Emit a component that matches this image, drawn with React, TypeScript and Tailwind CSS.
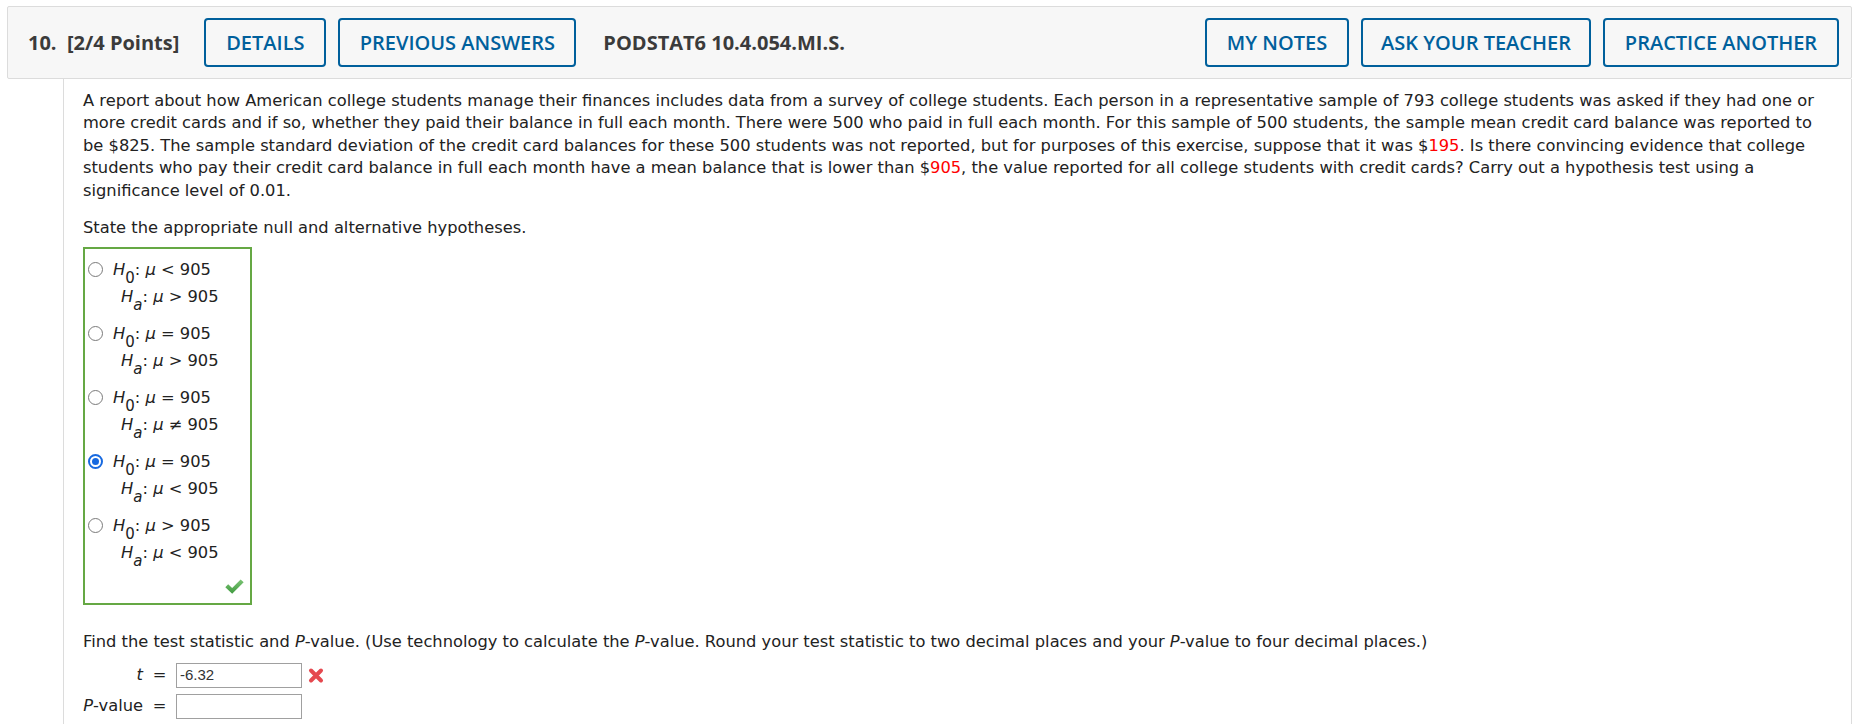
import React from "react";

const BODY = "font-['DejaVu_Sans',Verdana,sans-serif]";
const HEAD = "font-['Open_Sans','Noto_Sans',sans-serif]";

function Btn({ label, w }: { label: string; w: string }) {
  return (
    <div
      className={`${w} h-[49px] flex items-center justify-center rounded-[4px] border-2 border-[#00609c] text-[#00609c] text-[20px] font-semibold bg-transparent whitespace-nowrap`}
    >
      {label}
    </div>
  );
}

function Radio({ checked }: { checked?: boolean }) {
  if (checked) {
    return (
      <span className="w-[15px] h-[15px] rounded-full border-2 border-[#1769e0] bg-white flex items-center justify-center shrink-0">
        <span className="w-[7px] h-[7px] rounded-full bg-[#1769e0]" />
      </span>
    );
  }
  return <span className="w-[15px] h-[15px] rounded-full border-[1.5px] border-[#7a7a7a] bg-white shrink-0" />;
}

function H({ sub }: { sub: string }) {
  return (
    <span>
      <i>H</i>
      <span className={`relative top-[8px] text-[15px] ${sub === "a" ? "italic" : ""}`}>{sub}</span>
    </span>
  );
}

function Opt({ h0, ha, checked }: { h0: string; ha: string; checked?: boolean }) {
  return (
    <div className="flex items-start">
      <div className="h-[27px] flex items-center ml-[3px] mr-[10px]">
        <Radio checked={checked} />
      </div>
      <div>
        <div className="h-[27px] leading-[27px] whitespace-nowrap">
          <H sub="0" />: <i>μ</i> {h0}
        </div>
        <div className="h-[27px] leading-[27px] pl-[8px] whitespace-nowrap">
          <H sub="a" />: <i>μ</i> {ha}
        </div>
      </div>
    </div>
  );
}

export default function App() {
  return (
    <div className="w-[1865px] h-[724px] overflow-hidden bg-white pt-[6px]">
      <div className="ml-[7px] w-[1845px]">
        {/* header */}
        <div className={`${HEAD} h-[73px] bg-[#f7f7f7] border border-[#dcdcdc] rounded-[2px] flex items-center pl-[20px] pr-[12px]`}>
          <div className="text-[20px] font-bold text-[#3b3b3b] whitespace-pre">10.  [2/4 Points]</div>
          <div className="ml-[25px] flex gap-[12px]">
            <Btn label="DETAILS" w="w-[122px]" />
            <Btn label="PREVIOUS ANSWERS" w="w-[238px]" />
          </div>
          <div className="ml-[27px] text-[20px] font-bold text-[#3b3b3b] whitespace-nowrap">PODSTAT6 10.4.054.MI.S.</div>
          <div className="ml-auto flex gap-[12px]">
            <Btn label="MY NOTES" w="w-[144px]" />
            <Btn label="ASK YOUR TEACHER" w="w-[230px]" />
            <Btn label="PRACTICE ANOTHER" w="w-[236px]" />
          </div>
        </div>

        {/* content */}
        <div className={`${BODY} ml-[56px] h-[660px] border-x border-[#dcdcdc] pl-[19px] pr-[12px] pt-[11px] text-[16.3px] leading-[22.4px] text-[#222]`}>
          <p className="whitespace-nowrap">
            A report about how American college students manage their finances includes data from a survey of college students. Each person in a representative sample of 793 college students was asked if they had one or
            <br />
            more credit cards and if so, whether they paid their balance in full each month. There were 500 who paid in full each month. For this sample of 500 students, the sample mean credit card balance was reported to
            <br />
            be $825. The sample standard deviation of the credit card balances for these 500 students was not reported, but for purposes of this exercise, suppose that it was $<span className="text-[#ff0000]">195</span>. Is there convincing evidence that college
            <br />
            students who pay their credit card balance in full each month have a mean balance that is lower than $<span className="text-[#ff0000]">905</span>, the value reported for all college students with credit cards? Carry out a hypothesis test using a
            <br />
            significance level of 0.01.
          </p>

          <p className="mt-[15px]">State the appropriate null and alternative hypotheses.</p>

          <div className="mt-[8px] w-[169px] border-2 border-[#65a844] pt-[7px] pb-[8px] pr-[6px]">
            <div className="flex flex-col gap-[10px]">
              <Opt h0="< 905" ha="> 905" />
              <Opt h0="= 905" ha="> 905" />
              <Opt h0="= 905" ha="≠ 905" />
              <Opt h0="= 905" ha="< 905" checked />
              <Opt h0="> 905" ha="< 905" />
            </div>
            <div className="flex justify-end mt-[13px]">
              <svg width="19" height="16" viewBox="0 0 18 15">
                <defs>
                  <linearGradient id="gck" x1="0" y1="0" x2="0" y2="1">
                    <stop offset="0" stopColor="#7cc475" />
                    <stop offset="1" stopColor="#3f9a3f" />
                  </linearGradient>
                </defs>
                <path d="M0.3 7.8 L3 5 L6.8 8.4 L14.8 0.3 L17.7 3 L6.8 14 Z" fill="url(#gck)" />
              </svg>
            </div>
          </div>

          <p className="mt-[26px] whitespace-nowrap">
            Find the test statistic and <i>P</i>-value. (Use technology to calculate the <i>P</i>-value. Round your test statistic to two decimal places and your <i>P</i>-value to four decimal places.)
          </p>

          <div className="mt-[9px] flex flex-col gap-[6px]">
            <div className="flex items-center">
              <span className="w-[60px] text-right"><i>t</i></span>
              <span className="w-[33px] text-center">=</span>
              <div className="w-[126px] h-[25px] border border-[#a0a0a0] bg-white flex items-center pl-[3px] font-['Liberation_Sans',Arial,sans-serif] text-[15px] text-[#333]">
                -6.32
              </div>
              <svg className="ml-[6px]" width="16" height="17" viewBox="0 0 16 17">
                <path d="M3 3.5 L13 13.5 M13 3.5 L3 13.5" stroke="#e5484f" strokeWidth="4" strokeLinecap="round" />
              </svg>
            </div>
            <div className="flex items-center">
              <span className="w-[60px] text-right"><i>P</i>-value</span>
              <span className="w-[33px] text-center">=</span>
              <div className="w-[126px] h-[25px] border border-[#a0a0a0] bg-white" />
            </div>
          </div>
        </div>
      </div>
    </div>
  );
}
